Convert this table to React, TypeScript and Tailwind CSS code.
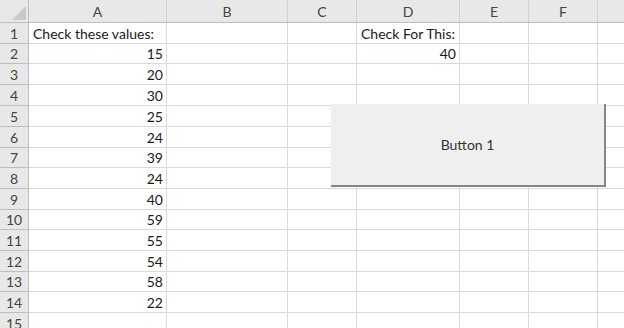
const cols = [
  { key: "A", w: "w-[138px]" },
  { key: "B", w: "w-[121px]" },
  { key: "C", w: "w-[69px]" },
  { key: "D", w: "w-[103px]" },
  { key: "E", w: "w-[69px]" },
  { key: "F", w: "w-[69px]" },
  { key: "", w: "w-[69px]" },
];

// row heights include the 1px bottom gridline
const rows: { n: number; h: string; a?: string; aLeft?: boolean; d?: string; dLeft?: boolean }[] = [
  { n: 1, h: "h-[21px]", a: "Check these values:", aLeft: true, d: "Check For This:", dLeft: true },
  { n: 2, h: "h-[20px]", a: "15", d: "40" },
  { n: 3, h: "h-[21px]", a: "20" },
  { n: 4, h: "h-[21px]", a: "30" },
  { n: 5, h: "h-[21px]", a: "25" },
  { n: 6, h: "h-[21px]", a: "24" },
  { n: 7, h: "h-[20px]", a: "39" },
  { n: 8, h: "h-[21px]", a: "24" },
  { n: 9, h: "h-[21px]", a: "40" },
  { n: 10, h: "h-[20px]", a: "59" },
  { n: 11, h: "h-[21px]", a: "55" },
  { n: 12, h: "h-[21px]", a: "54" },
  { n: 13, h: "h-[20px]", a: "58" },
  { n: 14, h: "h-[21px]", a: "22" },
  { n: 15, h: "h-[21px]" },
];

function Cell({ w, text, left }: { w: string; text?: string; left?: boolean }) {
  return (
    <div
      className={`${w} shrink-0 h-full border-r border-b border-[#dadada] flex items-center overflow-visible whitespace-nowrap ${
        left ? "justify-start pl-[4px]" : "justify-end pr-[3px]"
      }`}
    >
      {text}
    </div>
  );
}

export default function App() {
  return (
    <div
      className="relative w-[624px] h-[328px] overflow-hidden bg-white text-[14px] text-[#1a1a1a]"
      style={{ fontFamily: "Lato, 'Open Sans', sans-serif" }}
    >
      {/* Column headers */}
      <div className="flex h-[23px] bg-[#e8e8e8] border-b border-[#bdbdbd]">
        <div className="relative w-[29px] shrink-0 h-full border-r border-[#bdbdbd]">
          <svg width="14" height="14" viewBox="0 0 14 14" className="absolute right-[2px] bottom-[2px]">
            <polygon points="14,0 14,14 0,14" fill="#c9c9c9" />
          </svg>
        </div>
        {cols.map((c, i) => (
          <div
            key={i}
            className={`${c.w} shrink-0 h-full border-r border-[#d2d2d2] flex items-center justify-center text-[#444]`}
          >
            {c.key}
          </div>
        ))}
      </div>

      {/* Rows */}
      {rows.map((r) => (
        <div key={r.n} className={`flex ${r.h}`}>
          <div className="w-[29px] shrink-0 h-full bg-[#e8e8e8] border-r border-b border-[#bdbdbd] flex items-center justify-center text-[#444]">
            {r.n}
          </div>
          <Cell w="w-[138px]" text={r.a} left={r.aLeft} />
          <Cell w="w-[121px]" />
          <Cell w="w-[69px]" />
          <Cell w="w-[103px]" text={r.d} left={r.dLeft} />
          <Cell w="w-[69px]" />
          <Cell w="w-[69px]" />
          <Cell w="w-[69px]" />
        </div>
      ))}

      {/* Form button floating over the sheet */}
      <button className="absolute left-[331px] top-[104px] w-[275px] h-[83px] bg-[#efefef] border-r-2 border-b-2 border-[#858585] flex items-center justify-center text-[14px] text-[#333]">
        Button 1
      </button>
    </div>
  );
}
